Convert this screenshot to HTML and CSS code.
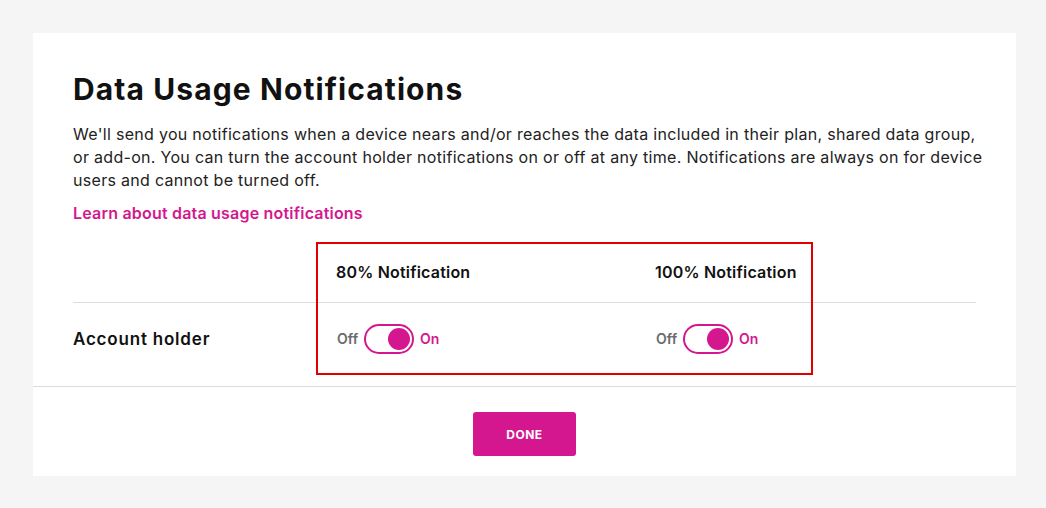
FILE: index.html
```html
<!DOCTYPE html>
<html lang="en">
<head>
  <meta charset="UTF-8">
  <meta name="viewport" content="width=device-width, initial-scale=1.0">
  <title>Data Usage Notifications</title>
  <link rel="stylesheet" href="styles.css">
</head>
<body>

  <!-- Modal de notificações -->
  <div class="card">
    <div class="card-body">
      <h1>Data Usage Notifications</h1>
      <p class="intro">We'll send you notifications when a device nears and/or reaches the data included in their plan, shared data group, or add-on. You can turn the account holder notifications on or off at any time. Notifications are always on for device users and cannot be turned off.</p>
      <a class="learn-link" href="#">Learn about data usage notifications</a>

      <div class="notif-table">
        <div class="highlight"></div>

        <div class="cell head"></div>
        <div class="cell head">80% Notification</div>
        <div class="cell head">100% Notification</div>

        <div class="cell row-label">Account holder</div>
        <div class="cell">
          <label class="switch">
            <span class="off">Off</span>
            <span class="track on-state"><span class="knob"></span></span>
            <span class="on">On</span>
          </label>
        </div>
        <div class="cell">
          <label class="switch">
            <span class="off">Off</span>
            <span class="track on-state"><span class="knob"></span></span>
            <span class="on">On</span>
          </label>
        </div>
      </div>
    </div>

    <div class="card-footer">
      <button class="done-btn">DONE</button>
    </div>
  </div>

</body>
</html>
```

FILE: styles.css
```css
/* Corpo */
body {
  margin: 0;
  padding: 33px 0 0 33px;
  background: #f5f5f5;
  font-family: Inter, "Open Sans", sans-serif;
  color: #1a1a1a;
}

/* Cartão */
.card {
  width: 983px;
  height: 443px;
  background: #ffffff;
  display: flex;
  flex-direction: column;
}

.card-body {
  padding: 38px 40px 0 40px;
  border-bottom: 1px solid #dcdcdc;
  height: 315px;
}

h1 {
  margin: 0;
  font-size: 30px;
  line-height: 36px;
  font-weight: 700;
  letter-spacing: 1.1px;
  color: #111;
}

.intro {
  margin: 16px 0 0 0;
  font-size: 16px;
  line-height: 23px;
  letter-spacing: 0.3px;
  color: #222;
  width: 911px;
}

.learn-link {
  display: inline-block;
  margin-top: 10px;
  font-size: 16px;
  line-height: 22px;
  font-weight: 600;
  letter-spacing: 0.2px;
  color: #d4178f;
  text-decoration: none;
}

/* Tabela de notificações */
.notif-table {
  position: relative;
  margin-top: 18px;
  display: grid;
  grid-template-columns: 243px 319px 1fr;
  grid-template-rows: 61px 71px;
}

.cell {
  display: flex;
  align-items: center;
  padding-left: 20px;
  font-size: 16px;
}

.head {
  font-weight: 600;
  letter-spacing: 0.2px;
  border-bottom: 1px solid #dcdcdc;
  color: #111;
}

.row-label {
  padding-left: 0;
  font-size: 17px;
  font-weight: 600;
  letter-spacing: 0.8px;
  color: #111;
}

.highlight {
  position: absolute;
  left: 243px;
  top: 0;
  width: 493px;
  height: 129px;
  border: 2px solid #e00000;
  pointer-events: none;
}

/* Interruptor */
.switch {
  display: flex;
  align-items: center;
  gap: 6px;
  font-size: 14px;
  font-weight: 600;
  padding-left: 1px;
}

.off {
  color: #6b6b6b;
}

.on {
  color: #d4178f;
}

.track {
  width: 42px;
  height: 26px;
  border: 2px solid #d4178f;
  border-radius: 15px;
  display: flex;
  align-items: center;
  justify-content: flex-end;
  padding: 0 2px;
  box-sizing: content-box;
}

.knob {
  width: 22px;
  height: 22px;
  border-radius: 50%;
  background: #d4178f;
}

/* Rodapé */
.card-footer {
  flex: 1;
  display: flex;
  justify-content: center;
  padding-top: 25px;
}

.done-btn {
  width: 103px;
  height: 44px;
  background: #d4178f;
  color: #fff;
  border: none;
  border-radius: 3px;
  font-family: Inter, sans-serif;
  font-size: 12px;
  font-weight: 700;
  letter-spacing: 0.5px;
  cursor: pointer;
}
```
